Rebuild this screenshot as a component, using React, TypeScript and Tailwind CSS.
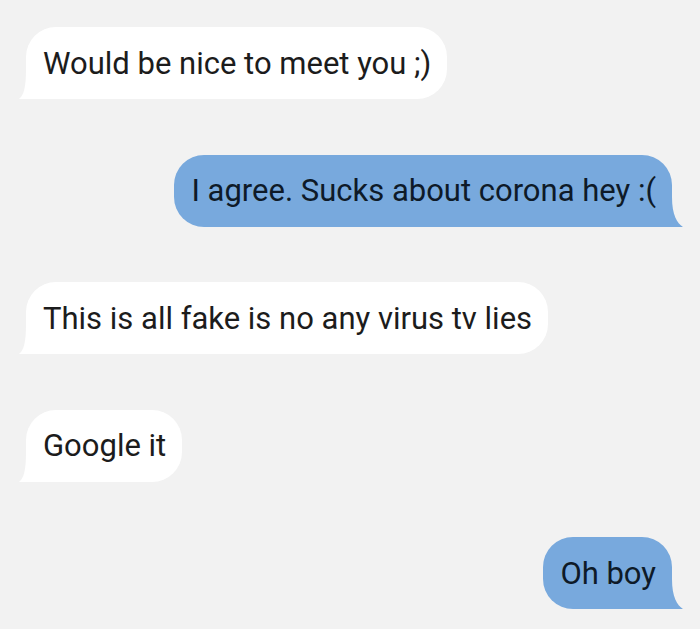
const messages = [
  { text: "Would be nice to meet you ;)", mine: false },
  { text: "I agree. Sucks about corona hey :(", mine: true },
  { text: "This is all fake is no any virus tv lies", mine: false },
  { text: "Google it", mine: false },
  { text: "Oh boy", mine: true },
]

const Tail = ({ mine }: { mine: boolean }) => {
  if (mine) {
    return (
      <svg className="absolute bottom-0 -right-[11px]" width="41" height="30" viewBox="0 0 41 30">
        <path d="M30 0 L0 0 L0 30 L41 30 C35 26 30 18 30 0 Z" fill="#78a9dd" />
      </svg>
    )
  }
  return (
    <svg className="absolute bottom-0 -left-[7px]" width="37" height="30" viewBox="0 0 37 30">
      <path d="M7 0 L37 0 L37 30 L0 30 C5 26 7 18 7 0 Z" fill="#ffffff" />
    </svg>
  )
}

const Bubble = ({ text, mine }: { text: string; mine: boolean }) => {
  return (
    <div className={mine ? "flex justify-end pr-[28px]" : "flex justify-start pl-[26px]"}>
      <div
        className={
          "relative h-[72px] rounded-[30px] flex items-center pl-[17px] pr-[16px] " +
          (mine ? "bg-[#78a9dd] text-[#0e1a28]" : "bg-white text-[#1c1c1c]")
        }
      >
        <Tail mine={mine} />
        <span className="relative text-[31px] leading-none whitespace-nowrap">{text}</span>
      </div>
    </div>
  )
}

const App = () => {
  return (
    <div className="w-[700px] h-[629px] bg-[#f2f2f2] overflow-hidden font-['Roboto',sans-serif]">
      <div className="flex flex-col gap-[55.5px] pt-[27px]">
        {messages.map((m, i) => (
          <Bubble key={i} text={m.text} mine={m.mine} />
        ))}
      </div>
    </div>
  )
}

export default App
